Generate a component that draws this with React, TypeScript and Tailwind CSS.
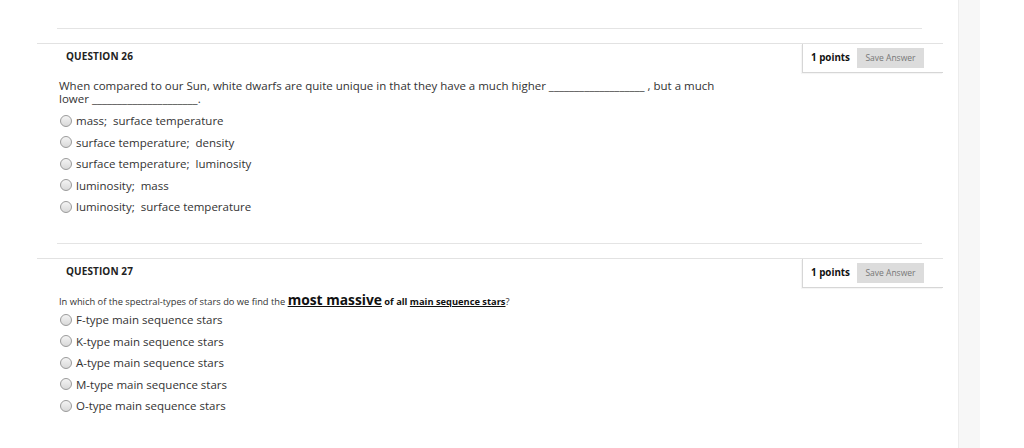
import React from "react";

const Radio = () => (
  <span className="inline-block w-[12px] h-[12px] rounded-full border border-[#9a9a9a] bg-gradient-to-b from-[#f4f4f4] to-[#d9d9d9] shrink-0" />
);

function Option({ label }: { label: string }) {
  return (
    <div className="flex items-center h-[21.5px] gap-[4px] pl-[1px]">
      <Radio />
      <span className="text-[11.5px] text-[#333] leading-none whitespace-pre">{label}</span>
    </div>
  );
}

function QuestionBlock({
  number,
  children,
  options,
}: {
  number: number;
  children: React.ReactNode;
  options: string[];
}) {
  return (
    <div className="h-[215px] flex flex-col">
      {/* separator */}
      <div className="ml-[57px] w-[865px] h-px bg-[#e4e4e4]" />
      <div className="mt-[14px] ml-[37px] w-[906px] border-t border-[#e2e2e2]">
        {/* header */}
        <div className="flex justify-between h-[29px]">
          <div className="pl-[29px] pt-[5px] text-[10px] font-bold text-[#222] tracking-[0.1px]">
            QUESTION {number}
          </div>
          <div className="w-[141px] border-l border-b border-[#d6d6d6] flex items-center pl-[8px] gap-[7px] shadow-[-1px_1px_1px_rgba(0,0,0,0.04)]">
            <span className="text-[9.8px] font-bold text-[#111]">1 points</span>
            <button className="w-[67px] h-[20px] bg-[#dcdcdc] text-[8.5px] text-[#777] flex items-center justify-center">
              Save Answer
            </button>
          </div>
        </div>
        <div className="pl-[22px]">
          {children}
          <div>
            {options.map((o) => (
              <Option key={o} label={o} />
            ))}
          </div>
        </div>
      </div>
    </div>
  );
}

export default function App() {
  return (
    <div className="w-[1024px] h-[448px] bg-white overflow-hidden flex font-['Open_Sans',sans-serif]">
      <div className="w-[958px] pt-[28px]">
        <QuestionBlock
          number={26}
          options={[
            "mass;  surface temperature",
            "surface temperature;  density",
            "surface temperature;  luminosity",
            "luminosity;  mass",
            "luminosity;  surface temperature",
          ]}
        >
          <p className="mt-[6px] mb-[5px] text-[11.5px] leading-[13px] text-[#333] whitespace-pre">
            When compared to our Sun, white dwarfs are quite unique in that they have a much higher ___________________ , but a much
            <br />
            lower _____________________.
          </p>
        </QuestionBlock>
        <QuestionBlock
          number={27}
          options={[
            "F-type main sequence stars",
            "K-type main sequence stars",
            "A-type main sequence stars",
            "M-type main sequence stars",
            "O-type main sequence stars",
          ]}
        >
          <p className="mt-[2px] mb-[3px] h-[16px] flex items-baseline text-[9.3px] text-[#333] whitespace-pre">
            <span>In which of the spectral-types of stars do we find the </span>
            <span className="text-[13.8px] font-bold underline text-[#111]">most massive</span>
            <span className="font-bold text-[#111]"> of all </span>
            <span className="font-bold underline text-[#111]">main sequence stars</span>
            <span>?</span>
          </p>
        </QuestionBlock>
      </div>
      <div className="w-[22px] h-full bg-[#f7f7f7] border-l border-[#ececec]" />
      <div className="flex-1 bg-white" />
    </div>
  );
}
